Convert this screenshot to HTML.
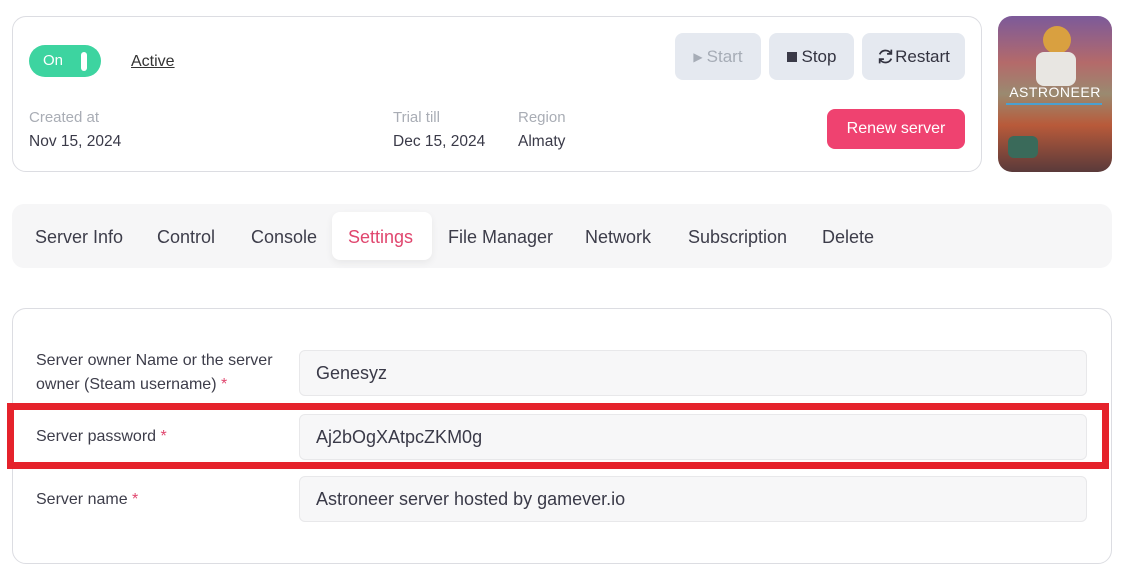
<!DOCTYPE html>
<html><head><meta charset="utf-8"><style>
*{box-sizing:border-box;margin:0;padding:0}
body{width:1133px;height:567px;background:#fff;font-family:"Liberation Sans",sans-serif;position:relative;overflow:hidden;color:#3a3a48}
.abs{position:absolute}
.card{position:absolute;border:1px solid #dcdde2;border-radius:14px;background:#fff}
.btn{position:absolute;background:#e5e9f0;border-radius:8px;font-size:17px;display:flex;align-items:center;justify-content:center;color:#333340}
.lbl{position:absolute;font-size:16px;color:#3d3d4a;line-height:24px}
.inp{position:absolute;left:299px;width:788px;height:46px;background:#f7f7f8;border:1px solid #e8e8ea;border-radius:6px;font-size:18px;color:#3a3a48;padding-left:16px;display:flex;align-items:center}
.tab{position:absolute;top:227px;font-size:18px;color:#3d3d4a}
.star{color:#e0466e}
</style></head><body>
<div class="card" style="left:12px;top:16px;width:970px;height:156px"></div>
<div class="abs" style="left:29px;top:45px;width:72px;height:32px;border-radius:16px;background:#3dd4a0"></div>
<div class="abs" style="left:43px;top:52px;color:#fff;font-size:15px">On</div>
<div class="abs" style="left:81px;top:52px;width:6px;height:19px;background:#fff;border-radius:3px"></div>
<div class="abs" style="left:131px;top:53px;font-size:16px;text-decoration:underline;color:#333">Active</div>
<div class="abs" style="left:29px;top:109px;font-size:15px;color:#a9adb5">Created at</div>
<div class="abs" style="left:29px;top:133px;font-size:15.5px">Nov 15, 2024</div>
<div class="abs" style="left:393px;top:109px;font-size:15px;color:#a9adb5">Trial till</div>
<div class="abs" style="left:393px;top:133px;font-size:15.5px">Dec 15, 2024</div>
<div class="abs" style="left:518px;top:109px;font-size:15px;color:#a9adb5">Region</div>
<div class="abs" style="left:518px;top:133px;font-size:15.5px">Almaty</div>
<div class="btn" style="left:675px;top:33px;width:86px;height:47px;color:#a6acb6"><span style="font-size:12px;margin-right:4px">▶</span>Start</div>
<div class="btn" style="left:769px;top:33px;width:85px;height:47px"><span style="display:inline-block;width:10px;height:10px;background:#3a3a48;margin-right:5px"></span>Stop</div>
<div class="btn" style="left:862px;top:33px;width:103px;height:47px"><svg width="17" height="17" viewBox="0 0 16 16" style="margin-right:1px"><path d="M13 5A6 6 0 0 0 2.5 6M3 11a6 6 0 0 0 10.5-1" fill="none" stroke="#333340" stroke-width="1.6"/><path d="M13.5 1.5V5.5H9.5M2.5 14.5V10.5H6.5" fill="none" stroke="#333340" stroke-width="1.6"/></svg>Restart</div>
<div class="btn" style="left:827px;top:109px;width:138px;height:40px;background:#ef4270;color:#fff;font-size:16px">Renew server</div>
<div class="abs" style="left:998px;top:16px;width:114px;height:156px;border-radius:14px;overflow:hidden;background:linear-gradient(180deg,#7c5a9a 0%,#b46a6a 30%,#9a8a70 50%,#b85a3a 70%,#5a3a3a 100%)">
<div class="abs" style="left:45px;top:10px;width:28px;height:28px;border-radius:50%;background:#d9a040"></div>
<div class="abs" style="left:38px;top:36px;width:40px;height:34px;background:#e8e6e2;border-radius:8px"></div>
<div class="abs" style="left:0;top:68px;width:114px;text-align:center;color:#fff;font-size:14px;letter-spacing:0.5px">ASTRONEER</div>
<div class="abs" style="left:8px;top:87px;width:96px;height:2px;background:#4aa0d0"></div>
<div class="abs" style="left:10px;top:120px;width:30px;height:22px;background:#3a6a5a;border-radius:6px"></div>
</div>
<div class="abs" style="left:12px;top:204px;width:1100px;height:64px;background:#f6f6f7;border-radius:12px"></div>
<div class="abs" style="left:332px;top:212px;width:100px;height:48px;background:#fff;border-radius:8px;box-shadow:0 3px 8px rgba(0,0,0,.06)"></div>
<div class="tab" style="left:35px">Server Info</div>
<div class="tab" style="left:157px">Control</div>
<div class="tab" style="left:251px">Console</div>
<div class="tab" style="left:348px;color:#e0466e">Settings</div>
<div class="tab" style="left:448px">File Manager</div>
<div class="tab" style="left:585px">Network</div>
<div class="tab" style="left:688px">Subscription</div>
<div class="tab" style="left:822px">Delete</div>
<div class="card" style="left:12px;top:308px;width:1100px;height:256px"></div>
<div class="lbl" style="left:36px;top:349px">Server owner Name or the server<br>owner (Steam username) <span class="star">*</span></div>
<div class="inp" style="top:350px">Genesyz</div>
<div class="lbl" style="left:36px;top:425px">Server password <span class="star">*</span></div>
<div class="inp" style="top:414px">Aj2bOgXAtpcZKM0g</div>
<div class="lbl" style="left:36px;top:488px">Server name <span class="star">*</span></div>
<div class="inp" style="top:476px">Astroneer server hosted by gamever.io</div>
<div class="abs" style="left:7px;top:403px;width:1102px;height:66px;border:7px solid #e5222b"></div>
</body></html>
